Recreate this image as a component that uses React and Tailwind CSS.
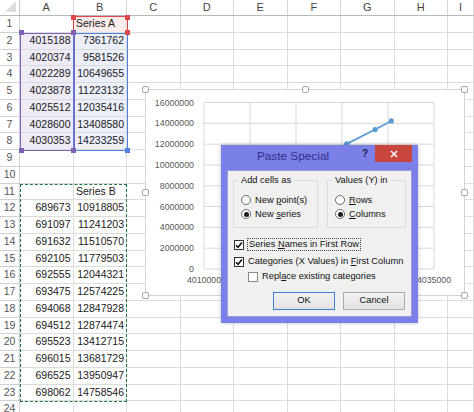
import React from "react";

const COLS = ["A", "B", "C", "D", "E", "F", "G", "H", "I"];
const ROW_H = 16.75;
const HEAD_H = 16;

const data = {
  1: ["", "Series A"],
  2: ["4015188", "7361762"],
  3: ["4020374", "9581526"],
  4: ["4022289", "10649655"],
  5: ["4023878", "11223132"],
  6: ["4025512", "12035416"],
  7: ["4028600", "13408580"],
  8: ["4030353", "14233259"],
  11: ["", "Series B"],
  12: ["689673", "10918805"],
  13: ["691097", "11241203"],
  14: ["691632", "11510570"],
  15: ["692105", "11779503"],
  16: ["692555", "12044321"],
  17: ["693475", "12574225"],
  18: ["694068", "12847928"],
  19: ["694512", "12874474"],
  20: ["695523", "13412715"],
  21: ["696015", "13681729"],
  22: ["696525", "13950947"],
  23: ["698062", "14758546"],
};

const rows = Array.from({ length: 24 }, (_, i) => i + 1);

const cellFill = (r, c) => {
  if (c === 0 && r >= 2 && r <= 8) return "bg-[#eeebf6]";
  if (c === 1 && r === 1) return "bg-[#fcecec]";
  if (c === 1 && r >= 2 && r <= 8) return "bg-[#ebeffa]";
  return "";
};

const Cell = ({ r, c }) => {
  const v = data[r] ? data[r][c] : undefined;
  const isText = v && isNaN(Number(v));
  const last = c === 8;
  return (
    <div
      className={`${last ? "flex-1" : "w-[53.5px] shrink-0"} h-full border-r border-b border-[#dcdcdc] flex items-center ${
        isText ? "justify-start pl-[2.5px]" : "justify-end pr-[2px]"
      } ${cellFill(r, c)}`}
    >
      {v}
    </div>
  );
};

const Handle = ({ x, y, color }) => (
  <div
    className={`absolute w-[5px] h-[5px] ${color}`}
    style={{ left: x - 2.5, top: y - 2.5 }}
  />
);

const rowTop = (r) => HEAD_H + (r - 1) * ROW_H;

const pts = [
  [4015188, 7361762],
  [4020374, 9581526],
  [4022289, 10649655],
  [4023878, 11223132],
  [4025512, 12035416],
  [4028600, 13408580],
  [4030353, 14233259],
];

const PX0 = 58;
const PX1 = 288;
const PY0 = 179;
const PY1 = 12.6;
const sx = (x) => PX0 + ((x - 4010000) / 25000) * (PX1 - PX0);
const sy = (y) => PY0 - (y / 16000000) * (PY0 - PY1);

const ChartHandle = ({ cls }) => (
  <div
    className={`absolute w-[7px] h-[7px] rounded-[2px] bg-white border border-[#a6a6a6] ${cls}`}
  />
);

const Chart = () => {
  const yTicks = [0, 1, 2, 3, 4, 5, 6, 7, 8];
  const xTicks = [4010000, 4015000, 4020000, 4025000, 4030000, 4035000];
  // labels between the ends sit under the dialog
  const xLabels = [4010000, 4035000];
  return (
    <div className="absolute left-[145px] top-[89px] w-[320px] h-[207px] bg-white border border-[#d4d4d4]">
      <svg width="320" height="207" className="absolute left-0 top-0">
        {yTicks.map((k) => {
          const y = PY0 - k * ((PY0 - PY1) / 8);
          return (
            <g key={k}>
              <line x1={PX0} x2={PX1} y1={y} y2={y} stroke="#d9d9d9" strokeWidth="1" />
              <text
                x="48"
                y={y + 3}
                textAnchor="end"
                fontSize="8.8"
                fill="#595959"
                fontFamily="'Liberation Sans', Arial, sans-serif"
              >
                {k * 2000000}
              </text>
            </g>
          );
        })}
        {xTicks.map((t) => (
          <line key={t} x1={sx(t)} x2={sx(t)} y1={PY1} y2={PY0} stroke="#d9d9d9" strokeWidth="1" />
        ))}
        {xLabels.map((t) => (
          <text
            key={t}
            x={sx(t)}
            y="193"
            textAnchor="middle"
            fontSize="8.8"
            fill="#595959"
            fontFamily="'Liberation Sans', Arial, sans-serif"
          >
            {t}
          </text>
        ))}
        <polyline
          points={pts.map(([x, y]) => `${sx(x)},${sy(y)}`).join(" ")}
          fill="none"
          stroke="#5b9bd5"
          strokeWidth="1.8"
        />
        {pts.map(([x, y], i) => (
          <circle key={i} cx={sx(x)} cy={sy(y)} r="2.6" fill="#5b9bd5" />
        ))}
      </svg>
      <ChartHandle cls="-left-[4px] -top-[4px]" />
      <ChartHandle cls="left-[156px] -top-[4px]" />
      <ChartHandle cls="-right-[4px] -top-[4px]" />
      <ChartHandle cls="-left-[4px] top-[99px]" />
      <ChartHandle cls="-right-[4px] top-[99px]" />
      <ChartHandle cls="-left-[4px] -bottom-[4px]" />
      <ChartHandle cls="left-[156px] -bottom-[4px]" />
      <ChartHandle cls="-right-[4px] -bottom-[4px]" />
    </div>
  );
};

const Radio = ({ checked, children }) => (
  <div className="flex items-center gap-[4px] h-[14px]">
    <span className="w-[10px] h-[10px] rounded-full bg-white border border-[#6b6b6b] flex items-center justify-center">
      {checked && <span className="w-[5px] h-[5px] rounded-full bg-[#1a1a1a]" />}
    </span>
    <span>{children}</span>
  </div>
);

const Check = ({ checked, gray }) => (
  <span
    className={`w-[10px] h-[10px] shrink-0 bg-white border ${
      gray ? "border-[#8a8a8a]" : "border-[#333]"
    } flex items-center justify-center`}
  >
    {checked && (
      <svg width="8" height="8" viewBox="0 0 8 8">
        <path d="M1 4.2 L3 6.3 L7 1.5" fill="none" stroke="#111" strokeWidth="1.6" />
      </svg>
    )}
  </span>
);

const Dialog = () => (
  <div className="absolute left-[221px] top-[145px] w-[197px] h-[178px] bg-[#7b7fe8] flex flex-col px-[6px] pb-[6px] shadow-[0_0_4px_rgba(0,0,0,0.25)]">
    <div className="h-[25px] flex items-start shrink-0">
      <div className="flex-1 h-[23px] flex items-center justify-center text-[11.8px] text-[#2e2f8a] pl-[4px]">
        Paste Special
      </div>
      <div className="w-[20px] h-[17px] flex items-center justify-center text-[10px] font-bold text-[#1f1f4d]">
        ?
      </div>
      <div className="w-[37px] h-[17px] bg-[#c9463d] flex items-center justify-center">
        <svg width="8" height="8" viewBox="0 0 8 8">
          <path d="M1 1 L7 7 M7 1 L1 7" stroke="#fff" strokeWidth="1.5" />
        </svg>
      </div>
    </div>
    <div className="flex-1 bg-[#f0f0f0] border border-[#9a9ad8] px-[5px] pt-[5px] text-[9.3px] text-[#111] leading-none">
      <div className="flex gap-[9px]">
        <fieldset className="w-[85px] h-[52px] border border-[#dcdcdc] pl-[7px] pt-[8px]">
          <legend className="px-[3px] -ml-[3px]">Add cells as</legend>
          <Radio>
            New <u>p</u>oint(s)
          </Radio>
          <Radio checked>
            New <u>s</u>eries
          </Radio>
        </fieldset>
        <fieldset className="w-[79px] h-[52px] border border-[#dcdcdc] pl-[7px] pt-[8px]">
          <legend className="px-[3px] -ml-[3px]">Values (Y) in</legend>
          <Radio>
            <u>R</u>ows
          </Radio>
          <Radio checked>
            <u>C</u>olumns
          </Radio>
        </fieldset>
      </div>
      <div className="mt-[10px] flex flex-col pl-[1px]">
        <div className="flex items-center gap-[3px] h-[13px]">
          <Check checked />
          <span className="border border-dotted border-[#444] px-[1px] py-[1px]">
            Series <u>N</u>ames in First Row
          </span>
        </div>
        <div className="flex items-center gap-[4px] h-[13px] mt-[4px]">
          <Check checked />
          <span>
            Categories (X Values) in <u>F</u>irst Column
          </span>
        </div>
        <div className="flex items-center gap-[4px] h-[13px] mt-[2px] pl-[14px]">
          <Check gray />
          <span>
            Repl<u>a</u>ce existing categories
          </span>
        </div>
      </div>
      <div className="mt-[9px] flex justify-end gap-[8px] pr-[1px]">
        <button className="w-[62px] h-[18px] border border-[#3c7fd6] bg-gradient-to-b from-[#f2f2f2] to-[#e2e2e2] text-[9.3px]">
          OK
        </button>
        <button className="w-[62px] h-[18px] border border-[#acacac] bg-gradient-to-b from-[#f2f2f2] to-[#e2e2e2] text-[9.3px]">
          Cancel
        </button>
      </div>
    </div>
  </div>
);

export default function App() {
  return (
    <div
      className="relative w-[474px] h-[412px] overflow-hidden bg-white text-[10.5px] text-[#1a1a1a]"
      style={{ fontFamily: "'Liberation Sans', Arial, sans-serif" }}
    >
      <div className="flex flex-col">
        <div className="flex h-[16px] border-b border-[#b9b9b9] text-[11px] text-[#444]">
          <div className="w-[20px] shrink-0 border-r border-[#c8c8c8] relative">
            <svg width="11" height="11" className="absolute right-[3px] bottom-[3px]">
              <path d="M11 0 L11 11 L0 11 Z" fill="#dcdcdc" />
            </svg>
          </div>
          {COLS.map((c, i) => (
            <div
              key={c}
              className={`${i === 8 ? "flex-1" : "w-[53.5px] shrink-0"} border-r border-[#d8d8d8] flex items-center justify-center`}
            >
              {c}
            </div>
          ))}
        </div>
        {rows.map((r) => (
          <div key={r} className="flex h-[16.75px]">
            <div className="w-[20px] shrink-0 border-r border-b border-[#d0d0d0] flex items-center justify-center text-[10.5px] text-[#555]">
              {r}
            </div>
            {COLS.map((c, i) => (
              <Cell key={c} r={r} c={i} />
            ))}
          </div>
        ))}
      </div>

      {/* B1 red range */}
      <div
        className="absolute border-[1.5px] border-[#e0474c]"
        style={{ left: 73, top: HEAD_H, width: 54.5, height: ROW_H + 1 }}
      />
      {/* B2:B8 blue range */}
      <div
        className="absolute border-[1.5px] border-[#4f7fdc]"
        style={{ left: 73, top: rowTop(2), width: 54.5, height: ROW_H * 7 + 1 }}
      />
      {/* A2:A8 purple range */}
      <div
        className="absolute border-[1.5px] border-[#7f62b5]"
        style={{ left: 19.5, top: rowTop(2), width: 55, height: ROW_H * 7 + 1 }}
      />
      <Handle x={73.5} y={HEAD_H + 1} color="bg-[#e0474c]" />
      <Handle x={127} y={HEAD_H + 1} color="bg-[#e0474c]" />
      <Handle x={127} y={rowTop(2)} color="bg-[#e0474c]" />
      <Handle x={21} y={rowTop(2)} color="bg-[#7f62b5]" />
      <Handle x={73.5} y={rowTop(2)} color="bg-[#7f62b5]" />
      <Handle x={21} y={rowTop(9)} color="bg-[#7f62b5]" />
      <Handle x={73.5} y={rowTop(9)} color="bg-[#7f62b5]" />
      <Handle x={127} y={rowTop(9)} color="bg-[#4f7fdc]" />

      {/* copy marquee A11:B23 */}
      <div
        className="absolute border-[1.5px] border-dashed border-[#217346]"
        style={{ left: 20, top: rowTop(11), width: 107, height: ROW_H * 13 + 1 }}
      />

      <Chart />
      <Dialog />
    </div>
  );
}
